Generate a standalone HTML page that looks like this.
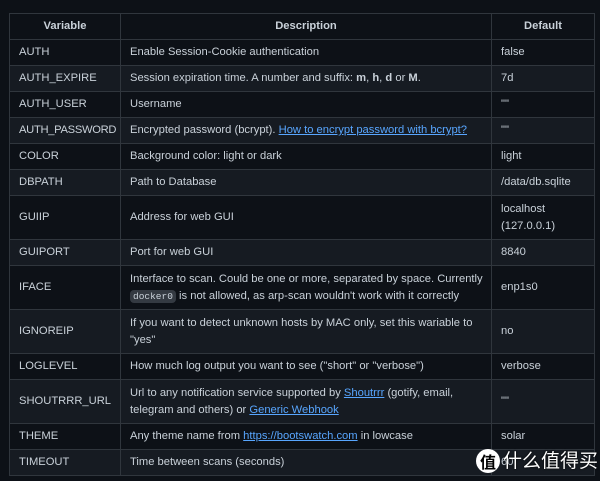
<!DOCTYPE html>
<html><head><meta charset="utf-8"><style>
html,body{margin:0;padding:0;background:#0d1117;width:600px;height:481px;overflow:hidden;font-family:"Liberation Sans","Noto Sans CJK SC",sans-serif;color:#c9d1d9;font-size:11.2px}
table{position:absolute;left:9px;top:13px;border-collapse:collapse;width:585px;table-layout:fixed}
td,th{border:1px solid #30363d;padding:0 9px;line-height:17px;text-align:left;vertical-align:middle;white-space:nowrap;overflow:visible}
th{text-align:center;font-weight:bold;height:25px}
tr.l td{background:#161b22}
td{height:25px}
td.t{height:43px}
td.s{letter-spacing:-0.3px}
a{color:#58a6ff;text-decoration:underline}
code{font-family:"Liberation Mono",monospace;font-size:9.5px;background:#343a42;border-radius:4px;padding:1px 3px}
.wm{position:absolute;left:476px;top:449px;width:24px;height:24px;border-radius:50%;background:#fff;color:#000;font-size:16px;text-align:center;line-height:24px;font-weight:bold;font-family:"Noto Sans CJK SC",sans-serif}
.wt{position:absolute;left:503px;top:447px;color:#fff;font-size:19px;font-family:"Noto Sans CJK SC",sans-serif;line-height:26px;white-space:nowrap;text-shadow:0 0 2px #000}
</style></head><body>
<table>
<colgroup><col style="width:111px"><col style="width:371px"><col style="width:103px"></colgroup>
<tr><th>Variable</th><th>Description</th><th>Default</th></tr>
<tr><td>AUTH</td><td>Enable Session-Cookie authentication</td><td>false</td></tr>
<tr class="l"><td>AUTH_EXPIRE</td><td>Session expiration time. A number and suffix: <b>m</b>, <b>h</b>, <b>d</b> or <b>M</b>.</td><td>7d</td></tr>
<tr><td>AUTH_USER</td><td>Username</td><td>""</td></tr>
<tr class="l"><td class="s">AUTH_PASSWORD</td><td>Encrypted password (bcrypt). <a>How to encrypt password with bcrypt?</a></td><td>""</td></tr>
<tr><td>COLOR</td><td>Background color: light or dark</td><td>light</td></tr>
<tr class="l"><td>DBPATH</td><td>Path to Database</td><td>/data/db.sqlite</td></tr>
<tr><td class="t">GUIIP</td><td>Address for web GUI</td><td>localhost<br>(127.0.0.1)</td></tr>
<tr class="l"><td>GUIPORT</td><td>Port for web GUI</td><td>8840</td></tr>
<tr><td class="t">IFACE</td><td>Interface to scan. Could be one or more, separated by space. Currently<br><code>docker0</code> is not allowed, as arp-scan wouldn't work with it correctly</td><td>enp1s0</td></tr>
<tr class="l"><td class="t">IGNOREIP</td><td>If you want to detect unknown hosts by MAC only, set this wariable to<br>"yes"</td><td>no</td></tr>
<tr><td>LOGLEVEL</td><td>How much log output you want to see ("short" or "verbose")</td><td>verbose</td></tr>
<tr class="l"><td class="t">SHOUTRRR_URL</td><td>Url to any notification service supported by <a>Shoutrrr</a> (gotify, email,<br>telegram and others) or <a>Generic Webhook</a></td><td>""</td></tr>
<tr><td>THEME</td><td>Any theme name from <a>https://bootswatch.com</a> in lowcase</td><td>solar</td></tr>
<tr class="l"><td>TIMEOUT</td><td>Time between scans (seconds)</td><td>60</td></tr>
</table>
<div class="wm">值</div>
<div class="wt">什么值得买</div>
</body></html>
